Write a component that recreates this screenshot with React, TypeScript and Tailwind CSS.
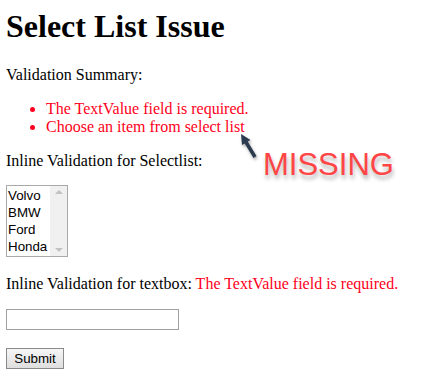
const cars = ['Volvo', 'BMW', 'Ford', 'Honda']
const errors = ['The TextValue field is required.', 'Choose an item from select list']

function ListBox() {
  return (
    <div className="flex w-[62px] h-[72px] border border-[#a9a9a9] bg-white font-['Liberation_Sans',Arial,sans-serif] text-[13.33px] text-black">
      <div className="flex-1 pl-[1px] pt-[1px] flex flex-col">
        {cars.map((c) => (
          <div key={c} className="h-[17px] leading-[17px]">{c}</div>
        ))}
      </div>
      <div className="w-[17px] bg-[#f0f0f0] flex flex-col items-center justify-between py-[4px]">
        <span className="w-0 h-0 border-x-[4px] border-x-transparent border-b-[4px] border-b-[#c2c2c2]" />
        <span className="w-0 h-0 border-x-[4px] border-x-transparent border-t-[4px] border-t-[#c2c2c2]" />
      </div>
    </div>
  )
}

export default function App() {
  return (
    <div className="relative w-[444px] h-[384px] bg-white pl-[6px] pt-[8px] font-['Liberation_Serif','Times_New_Roman',serif] text-[16px] leading-[18px] text-black overflow-hidden">
      <h1 className="text-[32px] leading-[37px] font-bold">Select List Issue</h1>

      <p className="mt-[21px]">Validation Summary:</p>
      <ul className="mt-[16px] pl-[40px] list-disc text-[#ff0020]">
        {errors.map((e) => (
          <li key={e}>{e}</li>
        ))}
      </ul>

      <p className="mt-[16px]">Inline Validation for Selectlist:</p>
      <div className="mt-[15px]">
        <ListBox />
      </div>

      <p className="mt-[18px]">
        Inline Validation for textbox:{' '}
        <span className="text-[#ff0020]">The TextValue field is required.</span>
      </p>

      <div className="mt-[16px]">
        <input
          type="text"
          className="block w-[173px] h-[21px] border border-[#a0a0a0] bg-white outline-none px-1 font-['Liberation_Sans',Arial,sans-serif] text-[13.33px]"
        />
      </div>

      <div className="mt-[18px]">
        <button className="w-[58px] h-[21px] border border-[#8a8a8a] bg-gradient-to-b from-[#f6f6f6] to-[#dedede] font-['Liberation_Sans',Arial,sans-serif] text-[13.33px] leading-[19px] text-black">
          Submit
        </button>
      </div>

      {/* annotation overlay */}
      <svg
        className="absolute left-[236px] top-[130px] drop-shadow-[1px_2px_1.5px_rgba(0,0,0,0.35)]"
        width="24"
        height="30"
        viewBox="0 0 24 30"
      >
        <polygon
          points="5,4 14.5,9.9 11.7,11.6 20.5,26.1 17.5,27.9 8.7,13.4 6,15.1"
          fill="#2b3a4c"
        />
      </svg>
      <div className="absolute left-[263px] top-[148px] font-['Liberation_Sans',Arial,sans-serif] text-[31px] leading-[34px] text-[#ff4545] [text-shadow:1px_4px_4px_rgba(0,0,0,0.3)]">
        MISSING
      </div>
    </div>
  )
}
